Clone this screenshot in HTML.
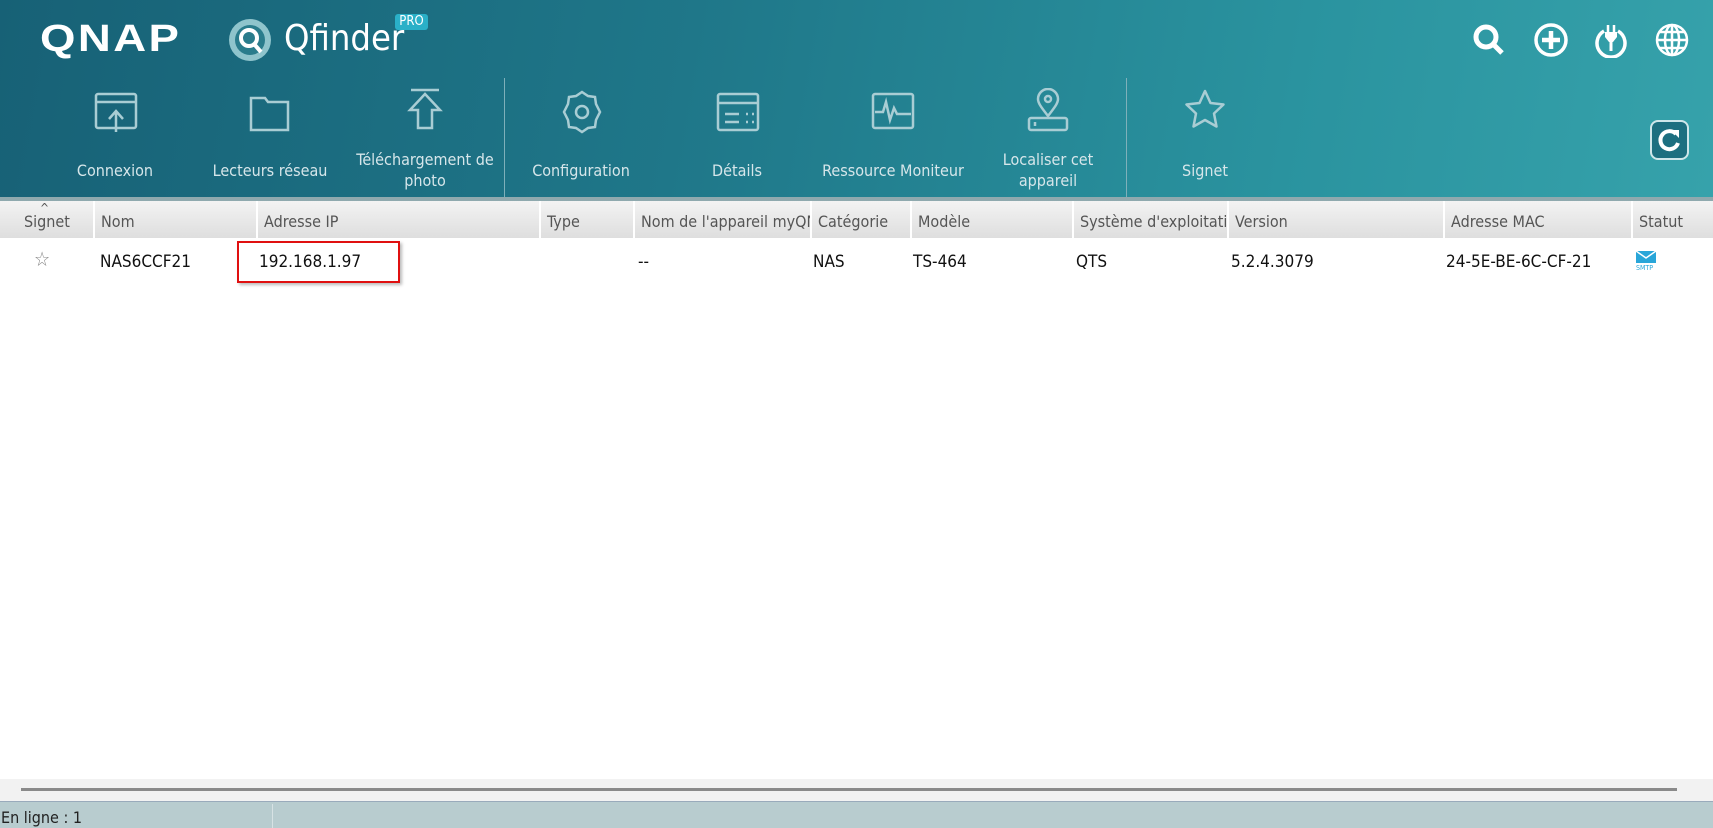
<!DOCTYPE html>
<html><head><meta charset="utf-8"><style>
*{margin:0;padding:0;box-sizing:border-box}
body{width:1713px;height:828px;overflow:hidden;background:#fff;font-family:"DejaVu Sans Condensed","Liberation Sans",sans-serif;position:relative}
#hdr{position:absolute;left:0;top:0;width:1713px;height:201px;background:linear-gradient(100deg,#176176 0%,#1f7789 40%,#2a939f 75%,#36a2ab 100%)}
#hdr:after{content:"";position:absolute;left:0;right:0;bottom:0;height:4px;background:#8fa9ae}
.tb{position:absolute;width:156px;text-align:center;color:#d6e6ea;font-size:16px;line-height:21px}
.sep{position:absolute;top:78px;width:1px;height:122px;background:#7eb0ba}
.ti{position:absolute;top:22px}
#th{position:absolute;top:201px;left:0;width:1713px;height:37px;background:linear-gradient(#f3f3f3,#dedede)}
.c{position:absolute;top:0;height:37px;border-left:2px solid #fff;font-size:16px;color:#555;line-height:42px;padding-left:6px;white-space:nowrap;overflow:hidden}
.d{position:absolute;top:252px;font-size:17px;color:#111;white-space:nowrap}
</style></head><body>
<div id="hdr">
 <div style="position:absolute;left:40px;top:18px;color:#fff;font:bold 38px 'Liberation Sans',sans-serif;letter-spacing:2px;transform:scaleX(1.2);transform-origin:left">QNAP</div>
 <svg style="position:absolute;left:226px;top:16px" width="50" height="50" viewBox="0 0 50 50"><circle cx="24" cy="24" r="21" fill="#8fc4cc"/><circle cx="24" cy="24" r="15" fill="#2a7c8c"/><circle cx="23" cy="22" r="8" fill="none" stroke="#fff" stroke-width="4"/><path d="M28 28l7 8" stroke="#fff" stroke-width="4"/></svg>
 <div style="position:absolute;left:284px;top:18px;color:#fff;font-size:36px;font-family:'DejaVu Sans Condensed',sans-serif">Qfinder</div>
 <div style="position:absolute;left:395px;top:14px;width:33px;height:16px;background:#2ab0c8;color:#fff;font-size:13px;line-height:16px;text-align:center;border-radius:3px">PRO</div>
 <svg class="ti" style="left:1471px" width="36" height="36" viewBox="0 0 36 36"><circle cx="15" cy="15" r="10" fill="none" stroke="#fff" stroke-width="5"/><path d="M22 22l9 9" stroke="#fff" stroke-width="5"/></svg>
 <svg class="ti" style="left:1533px" width="36" height="36" viewBox="0 0 36 36"><circle cx="18" cy="18" r="15" fill="none" stroke="#fff" stroke-width="3.5"/><path d="M18 9v18M9 18h18" stroke="#fff" stroke-width="4.5"/></svg>
 <svg class="ti" style="left:1593px" width="36" height="36" viewBox="0 0 36 36"><path d="M11 9a14 14 0 1 0 14 0" fill="none" stroke="#fff" stroke-width="3.5"/><path d="M15 3v7M21 3v7" stroke="#fff" stroke-width="2.5"/><path d="M12 10h12v5l-4 5h-4l-4-5z" fill="#fff"/><path d="M18 20v9" stroke="#fff" stroke-width="3"/></svg>
 <svg class="ti" style="left:1654px" width="36" height="36" viewBox="0 0 36 36"><g fill="none" stroke="#fff" stroke-width="2.5"><circle cx="18" cy="18" r="15"/><ellipse cx="18" cy="18" rx="7" ry="15"/><path d="M18 3v30M3 18h30M6 10h24M6 26h24"/></g></svg>
 <div style="position:absolute;left:1650px;top:120px;width:39px;height:40px;border:2px solid #cfe6ea;border-radius:8px;background:#1d6f80"><svg width="35" height="36" viewBox="0 0 35 36"><path d="M24 12a9 9 0 1 0 2 9" fill="none" stroke="#fff" stroke-width="4"/><path d="M19 8h8v8z" fill="#fff"/></svg></div>
 <div class="tb" style="left:37px;top:160px">Connexion</div>
 <svg style="position:absolute;left:94px;top:92px" width="44" height="42" viewBox="0 0 44 42"><g fill="none" stroke="#a9cdd4" stroke-width="2.5"><rect x="2" y="2" width="40" height="34" rx="2"/><path d="M2 10h40M22 40V20M15 27l7-8 7 8"/></g></svg>
 <div class="tb" style="left:192px;top:160px">Lecteurs réseau</div>
 <svg style="position:absolute;left:248px;top:92px" width="44" height="42" viewBox="0 0 44 42"><path d="M3 6h14l3 4h20v28H3z" fill="none" stroke="#a9cdd4" stroke-width="2.5"/></svg>
 <div class="tb" style="left:347px;top:149px">Téléchargement de<br>photo</div>
 <svg style="position:absolute;left:405px;top:88px" width="40" height="44" viewBox="0 0 40 44"><g fill="none" stroke="#a9cdd4" stroke-width="2.5"><path d="M6 2h28M13 40V22H5l15-16 15 16h-8v18z"/></g></svg>
 <div class="sep" style="left:504px"></div>
 <div class="tb" style="left:503px;top:160px">Configuration</div>
 <svg style="position:absolute;left:560px;top:90px" width="44" height="44" viewBox="0 0 44 44"><g fill="none" stroke="#a9cdd4" stroke-width="2.5"><path d="M22 2l6 4 7 1 1 7 4 8-4 8-1 7-7 1-6 4-6-4-7-1-1-7-4-8 4-8 1-7 7-1z"/><circle cx="22" cy="22" r="6"/></g></svg>
 <div class="tb" style="left:659px;top:160px">Détails</div>
 <svg style="position:absolute;left:716px;top:92px" width="44" height="42" viewBox="0 0 44 42"><g fill="none" stroke="#a9cdd4" stroke-width="2.5"><rect x="2" y="2" width="40" height="36" rx="2"/><path d="M2 11h40M9 22h14M9 30h14M30 22h2M36 22h2M30 30h2M36 30h2"/></g></svg>
 <div class="tb" style="left:815px;top:160px">Ressource Moniteur</div>
 <svg style="position:absolute;left:871px;top:92px" width="44" height="42" viewBox="0 0 44 42"><g fill="none" stroke="#a9cdd4" stroke-width="2.5"><rect x="2" y="2" width="40" height="34" rx="2"/><path d="M4 20h8l3-10 4 18 4-12 3 6h14"/></g></svg>
 <div class="tb" style="left:970px;top:149px">Localiser cet<br>appareil</div>
 <svg style="position:absolute;left:1026px;top:88px" width="44" height="46" viewBox="0 0 44 46"><g fill="none" stroke="#a9cdd4" stroke-width="2.5"><path d="M22 28c-7-9-10-13-10-17a10 10 0 0 1 20 0c0 4-3 8-10 17z"/><circle cx="22" cy="11" r="3"/><rect x="3" y="30" width="38" height="12" rx="2"/><path d="M9 34v4"/></g></svg>
 <div class="sep" style="left:1126px"></div>
 <div class="tb" style="left:1127px;top:160px">Signet</div>
 <svg style="position:absolute;left:1183px;top:88px" width="44" height="44" viewBox="0 0 44 44"><path d="M22 3l5.5 12 13 1.5-9.5 9 2.5 13-11.5-6.5-11.5 6.5 2.5-13-9.5-9 13-1.5z" fill="none" stroke="#a9cdd4" stroke-width="2.5" stroke-linejoin="round"/></svg>
</div>
<div id="th">
 <div class="c" style="left:0;width:93px;border-left:0;padding-left:24px">Signet<span style="position:absolute;left:40px;top:-14px;font-size:12px">^</span></div>
 <div class="c" style="left:93px;width:163px">Nom</div>
 <div class="c" style="left:256px;width:283px">Adresse IP</div>
 <div class="c" style="left:539px;width:94px">Type</div>
 <div class="c" style="left:633px;width:177px">Nom de l'appareil myQNAPcloud</div>
 <div class="c" style="left:810px;width:100px">Catégorie</div>
 <div class="c" style="left:910px;width:162px">Modèle</div>
 <div class="c" style="left:1072px;width:155px">Système d'exploitation</div>
 <div class="c" style="left:1227px;width:216px">Version</div>
 <div class="c" style="left:1443px;width:188px">Adresse MAC</div>
 <div class="c" style="left:1631px;width:82px">Statut</div>
</div>
<div class="d" style="left:34px;color:#888;font-size:20px;top:247px">☆</div>
<div class="d" style="left:100px">NAS6CCF21</div>
<div style="position:absolute;left:237px;top:241px;width:163px;height:42px;border:2px solid #e01010;box-shadow:2px 2px 3px #bbb"></div>
<div class="d" style="left:259px">192.168.1.97</div>
<div class="d" style="left:638px">--</div>
<div class="d" style="left:813px">NAS</div>
<div class="d" style="left:913px">TS-464</div>
<div class="d" style="left:1076px">QTS</div>
<div class="d" style="left:1231px">5.2.4.3079</div>
<div class="d" style="left:1446px">24-5E-BE-6C-CF-21</div>
<svg style="position:absolute;left:1636px;top:251px" width="20" height="12" viewBox="0 0 20 12"><rect width="20" height="12" fill="#29a6d9"/><path d="M0 0l10 7 10-7" fill="none" stroke="#fff" stroke-width="1.5"/></svg>
<div style="position:absolute;left:1636px;top:264px;font-size:7px;color:#29a6d9">SMTP</div>
<div style="position:absolute;left:0;top:779px;width:1713px;height:22px;background:#f2f2f2"></div>
<div style="position:absolute;left:21px;top:788px;width:1656px;height:3px;background:#8a8a8a"></div>
<div style="position:absolute;left:0;top:801px;width:1713px;height:27px;background:#b8cccf;border-top:1px solid #9ab"></div>
<div style="position:absolute;left:272px;top:804px;width:1px;height:24px;background:#d7e2e4"></div>
<div style="position:absolute;left:1px;top:808px;font-size:16px;color:#222">En ligne : 1</div>
</body></html>
